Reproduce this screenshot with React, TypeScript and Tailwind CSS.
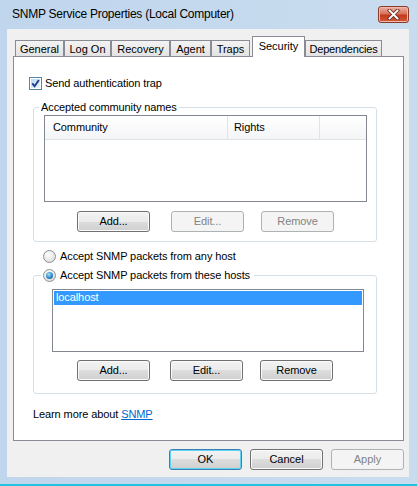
import type { ReactNode } from 'react';

const tabs = [
  { label: 'General', width: 'w-[49px]' },
  { label: 'Log On', width: 'w-[47px]' },
  { label: 'Recovery', width: 'w-[59px]' },
  { label: 'Agent', width: 'w-[41px]' },
  { label: 'Traps', width: 'w-[39px]' },
];

function PushButton({
  children,
  disabled,
  isDefault,
  className = '',
}: {
  children: ReactNode;
  disabled?: boolean;
  isDefault?: boolean;
  className?: string;
}) {
  if (disabled) {
    return (
      <button
        className={`flex h-[21px] w-[73px] items-center justify-center rounded-[3px] border border-[#adb2b5] bg-[#f4f4f4] text-[11px] text-[#838383] ${className}`}
      >
        {children}
      </button>
    );
  }
  return (
    <button
      className={`flex h-[21px] w-[73px] items-center justify-center rounded-[3px] border bg-[linear-gradient(#f2f2f2_0%,#ebebeb_50%,#dddddd_50%,#cfcfcf_100%)] text-[11px] text-black ${
        isDefault
          ? 'border-[#3c7fb1] shadow-[inset_0_0_0_1px_#5fd3f6]'
          : 'border-[#707070] shadow-[inset_0_0_0_1px_#fbfbfb]'
      } ${className}`}
    >
      {children}
    </button>
  );
}

function CheckBox() {
  return (
    <span className="flex h-[13px] w-[13px] shrink-0 items-center justify-center border border-[#5586a8] bg-white">
      <span className="flex h-[9px] w-[9px] items-center justify-center bg-[linear-gradient(135deg,#b9dcef,#eaf7fd)]">
        <svg width="9" height="9" viewBox="0 0 9 9">
          <path d="M1.2 4.4 L3.6 7.2 L7.9 1" stroke="#1f3d8c" strokeWidth="1.9" fill="none" />
        </svg>
      </span>
    </span>
  );
}

function Radio({ checked }: { checked?: boolean }) {
  return (
    <span className="flex h-[13px] w-[13px] shrink-0 items-center justify-center rounded-full border border-[#8f9192] bg-[radial-gradient(circle_at_40%_35%,#ffffff,#dcdcdc_80%)]">
      {checked && (
        <span className="h-[7px] w-[7px] rounded-full bg-[radial-gradient(circle_at_40%_35%,#9fe2ff,#1d78bd_65%,#0a4a85)]" />
      )}
    </span>
  );
}

function CloseButton() {
  return (
    <div className="mr-[8px] flex h-[17px] w-[31px] items-center justify-center rounded-[3px] border border-[#8a3a2a] bg-[linear-gradient(#eab0a2_0%,#d8735c_45%,#c4391d_55%,#d35a3a_100%)] shadow-[inset_0_0_0_1px_#f1b9aa]">
      <svg width="13" height="11" viewBox="0 0 13 11">
        <path d="M2.5 1.5 L10.5 9.5 M10.5 1.5 L2.5 9.5" stroke="#6b3326" strokeWidth="3.6" strokeLinecap="square" />
        <path d="M2.5 1.5 L10.5 9.5 M10.5 1.5 L2.5 9.5" stroke="#ffffff" strokeWidth="1.8" strokeLinecap="square" />
      </svg>
    </div>
  );
}

export default function App() {
  return (
    <div className="flex h-[486px] w-[417px] flex-col bg-[linear-gradient(to_right,#c0d6ed,#c9dcef)] font-['Liberation_Sans',Arial,sans-serif] text-[11px] leading-[13px] text-black">
      {/* title bar */}
      <div className="flex h-[29px] items-center justify-between pl-[12px]">
        <span className="text-[12px] tracking-[-0.25px]">SNMP Service Properties (Local Computer)</span>
        <CloseButton />
      </div>

      {/* client area */}
      <div className="ml-[7px] h-[448px] w-[402px] bg-[#f0f0f0] pl-[6px] pt-[7px]">
        {/* tab strip */}
        <div className="ml-[2px] flex h-[20px] items-end">
          {tabs.map((t) => (
            <div
              key={t.label}
              className={`flex h-[16px] ${t.width} items-center justify-center border border-b-0 border-[#898c95] bg-[linear-gradient(#f3f3f3,#e3e3e3)] pt-px`}
            >
              {t.label}
            </div>
          ))}
          <div className="relative z-10 -mb-px ml-[2px] flex h-[21px] w-[53px] items-start justify-center border border-b-0 border-[#898c95] bg-white pt-[3px]">
            Security
          </div>
          <div className="flex h-[16px] w-[77px] items-center justify-center border border-b-0 border-[#898c95] bg-[linear-gradient(#f3f3f3,#e3e3e3)] pt-px tracking-[-0.2px]">
            Dependencies
          </div>
        </div>

        {/* tab page */}
        <div className="h-[385px] w-[391px] border border-[#898c95] bg-white tracking-[-0.1px]">
          <label className="ml-[15px] mt-[20px] flex items-center gap-[3px]">
            <CheckBox />
            <span>Send authentication trap</span>
          </label>

          <fieldset className="ml-[19px] mt-[11px] w-[344px] rounded-[3px] border border-[#d5dfe5] pb-[9px]">
            <legend className="ml-[5px] px-[2px]">Accepted community names</legend>
            <div className="ml-[10px] mt-px h-[87px] w-[323px] border border-[#828790] bg-white">
              <div className="flex h-[24px] border-b border-[#e2e3e5] bg-[linear-gradient(#ffffff,#f4f5f7)]">
                <div className="flex w-[183px] items-center border-r border-[#e1e3e6] pl-[8px]">Community</div>
                <div className="flex w-[92px] items-center border-r border-[#e1e3e6] pl-[6px]">Rights</div>
              </div>
            </div>
            <div className="mt-[9px] flex">
              <PushButton className="ml-[43px]">Add...</PushButton>
              <PushButton disabled className="ml-[21px]">Edit...</PushButton>
              <PushButton disabled className="ml-[17px]">Remove</PushButton>
            </div>
          </fieldset>

          <label className="ml-[29px] mt-[8px] flex items-center gap-[4px]">
            <Radio />
            <span>Accept SNMP packets from any host</span>
          </label>

          <fieldset className="ml-[19px] mt-[6px] w-[344px] rounded-[3px] border border-[#d5dfe5] pb-[12px]">
            <legend className="ml-[7px] px-[2px]">
              <span className="flex items-center gap-[4px] pr-[2px]">
                <Radio checked />
                <span>Accept SNMP packets from these hosts</span>
              </span>
            </legend>
            <div className="ml-[18px] mt-[7px] h-[63px] w-[312px] border border-[#828790] bg-white p-px">
              <div className="h-[14px] bg-[#3399ff] pl-[2px] text-white">localhost</div>
            </div>
            <div className="mt-[8px] flex">
              <PushButton className="ml-[43px]">Add...</PushButton>
              <PushButton className="ml-[20px]">Edit...</PushButton>
              <PushButton className="ml-[17px]">Remove</PushButton>
            </div>
          </fieldset>

          <p className="ml-[19px] mt-[14px]">
            Learn more about <span className="text-[#0066cc] underline">SNMP</span>
          </p>
        </div>

        {/* dialog buttons */}
        <div className="mt-[8px] flex justify-end gap-[8px] pr-[5px]">
          <PushButton isDefault>OK</PushButton>
          <PushButton>Cancel</PushButton>
          <PushButton disabled>Apply</PushButton>
        </div>
      </div>

      <div className="h-[7px]" />
      <div className="h-[2px] bg-[#1fc3e0]" />
    </div>
  );
}
